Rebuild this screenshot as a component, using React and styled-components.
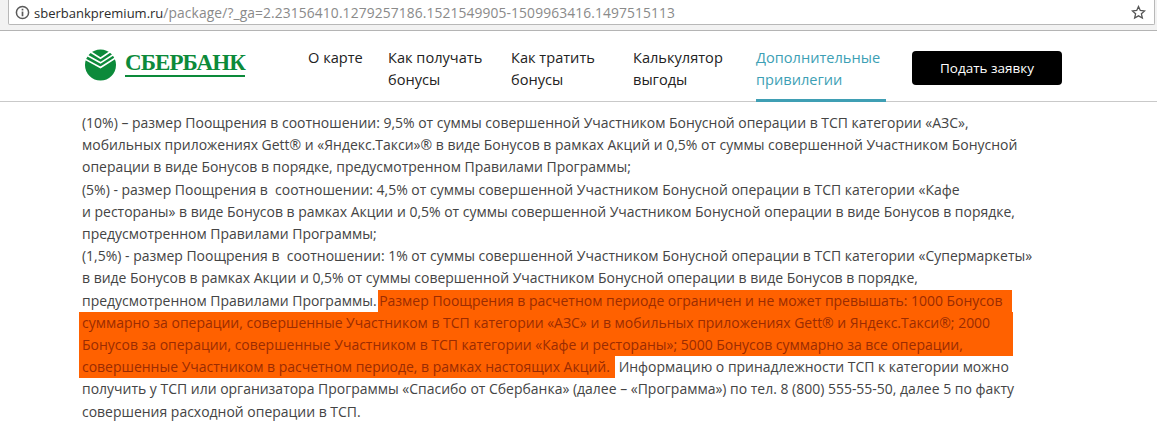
import React from "react";
import styled, { createGlobalStyle } from "styled-components";

const GlobalStyle = createGlobalStyle`
  html, body {
    margin: 0;
    background: #fff;
  }
  body {
    font-family: "Open Sans", "Noto Sans", sans-serif;
    overflow: hidden;
  }
`;

const Page = styled.div`
  width: 1157px;
  height: 439px;
  overflow: hidden;
`;

const BrowserBar = styled.div`
  height: 31px;
  box-sizing: border-box;
  background: #f2f2f2;
  border-bottom: 1px solid #b4b4b4;
  padding: 0 2px 0 8px;
`;

const AddressField = styled.div`
  height: 25px;
  display: flex;
  align-items: center;
  box-sizing: border-box;
  background: #fff;
  border: 1px solid #b8b8b8;
  border-top: 0;
  border-radius: 0 0 2px 2px;
  padding: 0 8px 0 6px;
`;

const Url = styled.div`
  flex: 1;
  margin-left: 4px;
  font-size: 13.8px;
  letter-spacing: 0.12px;
  color: #8a8a8a;
  white-space: nowrap;
  b {
    font-weight: 400;
    font-size: 13px;
    letter-spacing: 0;
    color: #2b2b2b;
  }
`;

const Header = styled.header`
  height: 71px;
  box-sizing: border-box;
  display: flex;
  border-bottom: 1px solid #c9c9c9;
  padding-left: 85px;
`;

const Logo = styled.div`
  width: 223px;
  height: 68px;
  display: flex;
  align-items: center;
  gap: 8px;
  color: #0c8a3a;
`;

const LogoWord = styled.span`
  font-family: "Liberation Serif", serif;
  font-weight: 700;
  font-size: 23px;
  line-height: 25px;
  letter-spacing: -0.9px;
  border-bottom: 2px solid #0c8a3a;
  margin-bottom: 3px;
`;

const Nav = styled.nav`
  display: flex;
`;

const NavItem = styled.a`
  display: block;
  width: ${(p) => p.$w}px;
  height: 71px;
  box-sizing: border-box;
  padding-top: 14.5px;
  margin-bottom: -1px;
  font-size: 14.6px;
  line-height: 22.5px;
  color: ${(p) => (p.$active ? "#3d9fb5" : "#222")};
  border-bottom: ${(p) => (p.$active ? "3px solid #3f9fb4" : "0")};
`;

const ApplyButton = styled.button`
  width: 150px;
  height: 34px;
  margin: 20px 0 0 26px;
  border: 0;
  border-radius: 4px;
  background: #000;
  color: #fff;
  font-family: inherit;
  font-size: 13.5px;
`;

const Body = styled.div`
  padding: 10px 0 0 82px;
  font-size: 13.97px;
  line-height: 22.2px;
  color: #444;
  white-space: nowrap;
`;

const Mark = styled.span`
  display: inline-block;
  vertical-align: top;
  box-sizing: border-box;
  width: ${(p) => p.$w}px;
  margin-left: ${(p) => (p.$inline ? -2 : -3)}px;
  padding-left: ${(p) => (p.$inline ? 1 : 3)}px;
  background: #ff6100;
  color: #9a2c02;
`;

function InfoIcon() {
  return (
    <svg width="15" height="15" viewBox="0 0 16 16" fill="none" stroke="#5a5a5a">
      <circle cx="8" cy="8" r="6.5" strokeWidth="1.6" />
      <path d="M8 7v5" strokeWidth="1.8" />
      <path d="M8 4v1.8" strokeWidth="1.8" />
    </svg>
  );
}

function StarIcon() {
  return (
    <svg width="15" height="15" viewBox="0 0 16 16" fill="none" stroke="#555" strokeWidth="1.4">
      <path d="M8 1.6l1.9 4.2 4.6.5-3.4 3.1 1 4.5L8 11.6l-4.1 2.3 1-4.5L1.5 6.3l4.6-.5z" />
    </svg>
  );
}

function LogoMark() {
  return (
    <svg width="32" height="32" viewBox="0 0 32 32">
      <circle cx="15.5" cy="16" r="15.5" fill="#0c8a3a" />
      <path
        d="M-1 9.5L15.5 18.5 32 8M1 5.800L15.5 13.8 30 4.5M4 2L15.5 9.2 27 1.5"
        stroke="#fff"
        strokeWidth="1.6"
        fill="none"
      />
    </svg>
  );
}

export default function App() {
  return (
    <Page>
      <GlobalStyle />
      <BrowserBar>
        <AddressField>
          <InfoIcon />
          <Url>
            <b>sberbankpremium.ru</b>/package/?_ga=2.23156410.1279257186.1521549905-1509963416.1497515113
          </Url>
          <StarIcon />
        </AddressField>
      </BrowserBar>
      <Header>
        <Logo>
          <LogoMark />
          <LogoWord>СБЕРБАНК</LogoWord>
        </Logo>
        <Nav>
          <NavItem $w={80}>О карте</NavItem>
          <NavItem $w={123}>Как получать<br />бонусы</NavItem>
          <NavItem $w={122}>Как тратить<br />бонусы</NavItem>
          <NavItem $w={123}>Калькулятор<br />выгоды</NavItem>
          <NavItem $w={130} $active>Дополнительные<br />привилегии</NavItem>
        </Nav>
        <ApplyButton>Подать заявку</ApplyButton>
      </Header>
      <Body>
        (10%) – размер Поощрения в соотношении: 9,5% от суммы совершенной Участником Бонусной операции в ТСП категории «АЗС»,<br />
        мобильных приложениях Gett® и «Яндекс.Такси»® в виде Бонусов в рамках Акций и 0,5% от суммы совершенной Участником Бонусной<br />
        операции в виде Бонусов в порядке, предусмотренном Правилами Программы;<br />
        (5%) - размер Поощрения в&nbsp; соотношении: 4,5% от суммы совершенной Участником Бонусной операции в ТСП категории «Кафе<br />
        и рестораны» в виде Бонусов в рамках Акции и 0,5% от суммы совершенной Участником Бонусной операции в виде Бонусов в порядке,<br />
        предусмотренном Правилами Программы;<br />
        (1,5%) - размер Поощрения в&nbsp; соотношении: 1% от суммы совершенной Участником Бонусной операции в ТСП категории «Супермаркеты»<br />
        в виде Бонусов в рамках Акции и 0,5% от суммы совершенной Участником Бонусной операции в виде Бонусов в порядке,<br />
        предусмотренном Правилами Программы. <Mark $w={634} $inline>Размер Поощрения в расчетном периоде ограничен и не может превышать: 1000 Бонусов</Mark><br />
        <Mark $w={934}>суммарно за операции, совершенные Участником в ТСП категории «АЗС» и в мобильных приложениях Gett® и Яндекс.Такси®; 2000</Mark><br />
        <Mark $w={934}>Бонусов за операции, совершенные Участником в ТСП категории «Кафе и рестораны»; 5000 Бонусов суммарно за все операции,</Mark><br />
        <Mark $w={536}>совершенные Участником в расчетном периоде, в рамках настоящих Акций.</Mark> Информацию о принадлежности ТСП к категории можно<br />
        получить у ТСП или организатора Программы «Спасибо от Сбербанка» (далее – «Программа») по тел. 8 (800) 555-55-50, далее 5 по факту<br />
        совершения расходной операции в ТСП.
      </Body>
    </Page>
  );
}
